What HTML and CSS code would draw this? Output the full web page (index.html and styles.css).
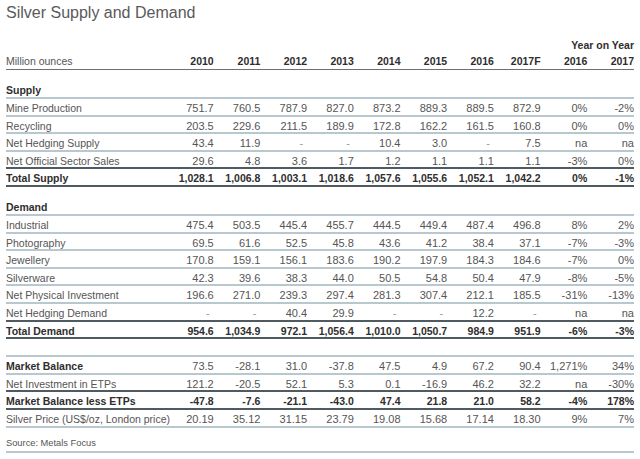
FILE: index.html
```html
<!DOCTYPE html>
<html>
<head>
<meta charset="utf-8">
<title>Silver Supply and Demand</title>
<link rel="stylesheet" href="styles.css">
</head>
<body>
<h1 class="title">Silver Supply and Demand</h1>
<div class="table">
  <div class="row yoy-row"><div class="yoy">Year on Year</div></div>
  <div class="row head">
    <div class="label">Million ounces</div>
    <div>2010</div><div>2011</div><div>2012</div><div>2013</div><div>2014</div><div>2015</div><div>2016</div><div>2017F</div><div>2016</div><div>2017</div>
  </div>
  <div class="row section"><div class="label">Supply</div></div>
  <div class="row"><div class="label">Mine Production</div><div>751.7</div><div>760.5</div><div>787.9</div><div>827.0</div><div>873.2</div><div>889.3</div><div>889.5</div><div>872.9</div><div>0%</div><div>-2%</div></div>
  <div class="row"><div class="label">Recycling</div><div>203.5</div><div>229.6</div><div>211.5</div><div>189.9</div><div>172.8</div><div>162.2</div><div>161.5</div><div>160.8</div><div>0%</div><div>0%</div></div>
  <div class="row"><div class="label">Net Hedging Supply</div><div>43.4</div><div>11.9</div><div class="dash">-</div><div class="dash">-</div><div>10.4</div><div>3.0</div><div class="dash">-</div><div>7.5</div><div>na</div><div>na</div></div>
  <div class="row dark"><div class="label">Net Official Sector Sales</div><div>29.6</div><div>4.8</div><div>3.6</div><div>1.7</div><div>1.2</div><div>1.1</div><div>1.1</div><div>1.1</div><div>-3%</div><div>0%</div></div>
  <div class="row dark bold"><div class="label">Total Supply</div><div>1,028.1</div><div>1,006.8</div><div>1,003.1</div><div>1,018.6</div><div>1,057.6</div><div>1,055.6</div><div>1,052.1</div><div>1,042.2</div><div>0%</div><div>-1%</div></div>
  <div class="row section"><div class="label">Demand</div></div>
  <div class="row"><div class="label">Industrial</div><div>475.4</div><div>503.5</div><div>445.4</div><div>455.7</div><div>444.5</div><div>449.4</div><div>487.4</div><div>496.8</div><div>8%</div><div>2%</div></div>
  <div class="row"><div class="label">Photography</div><div>69.5</div><div>61.6</div><div>52.5</div><div>45.8</div><div>43.6</div><div>41.2</div><div>38.4</div><div>37.1</div><div>-7%</div><div>-3%</div></div>
  <div class="row"><div class="label">Jewellery</div><div>170.8</div><div>159.1</div><div>156.1</div><div>183.6</div><div>190.2</div><div>197.9</div><div>184.3</div><div>184.6</div><div>-7%</div><div>0%</div></div>
  <div class="row"><div class="label">Silverware</div><div>42.3</div><div>39.6</div><div>38.3</div><div>44.0</div><div>50.5</div><div>54.8</div><div>50.4</div><div>47.9</div><div>-8%</div><div>-5%</div></div>
  <div class="row"><div class="label">Net Physical Investment</div><div>196.6</div><div>271.0</div><div>239.3</div><div>297.4</div><div>281.3</div><div>307.4</div><div>212.1</div><div>185.5</div><div>-31%</div><div>-13%</div></div>
  <div class="row dark"><div class="label">Net Hedging Demand</div><div class="dash">-</div><div class="dash">-</div><div>40.4</div><div>29.9</div><div class="dash">-</div><div class="dash">-</div><div>12.2</div><div class="dash">-</div><div>na</div><div>na</div></div>
  <div class="row dark bold"><div class="label">Total Demand</div><div>954.6</div><div>1,034.9</div><div>972.1</div><div>1,056.4</div><div>1,010.0</div><div>1,050.7</div><div>984.9</div><div>951.9</div><div>-6%</div><div>-3%</div></div>
  <div class="row empty"></div>
  <div class="row bold"><div class="label">Market Balance</div><div class="reg">73.5</div><div class="reg">-28.1</div><div class="reg">31.0</div><div class="reg">-37.8</div><div class="reg">47.5</div><div class="reg">4.9</div><div class="reg">67.2</div><div class="reg">90.4</div><div class="reg">1,271%</div><div class="reg">34%</div></div>
  <div class="row dark"><div class="label">Net Investment in ETPs</div><div>121.2</div><div>-20.5</div><div>52.1</div><div>5.3</div><div>0.1</div><div>-16.9</div><div>46.2</div><div>32.2</div><div>na</div><div>-30%</div></div>
  <div class="row dark bold"><div class="label">Market Balance less ETPs</div><div>-47.8</div><div>-7.6</div><div>-21.1</div><div>-43.0</div><div>47.4</div><div>21.8</div><div>21.0</div><div>58.2</div><div>-4%</div><div>178%</div></div>
  <div class="row"><div class="label">Silver Price (US$/oz, London price)</div><div>20.19</div><div>35.12</div><div>31.15</div><div>23.79</div><div>19.08</div><div>15.68</div><div>17.14</div><div>18.30</div><div>9%</div><div>7%</div></div>
  <div class="row source"><div class="label">Source: Metals Focus</div></div>
</div>
</body>
</html>
```

FILE: styles.css
```css
html, body {
  margin: 0;
  padding: 0;
  background: #ffffff;
}

body {
  padding: 0 6px;
  font-family: "Liberation Sans", Arial, sans-serif;
  color: #555555;
}

.title {
  margin: 0;
  padding-top: 1px;
  font-size: 16px;
  font-weight: normal;
  line-height: 24px;
  color: #5a5a5a;
}

.table {
  margin-top: 12px;
  width: 628px;
}

.row {
  display: grid;
  grid-template-columns: 161px repeat(10, 1fr);
  align-items: start;
  height: 17.6px;
  padding-top: 3px;
  box-sizing: border-box;
  border-bottom: 2px solid #b9c7cf;
  font-size: 11px;
  white-space: nowrap;
}

.row > div {
  text-align: right;
  line-height: 12.6px;
}

.row > .label {
  text-align: left;
  font-size: 10.5px;
}

.row.dark {
  border-bottom-color: #4f5a61;
}

.row.bold > div {
  font-weight: bold;
  color: #2e2e2e;
  font-size: 10.5px;
}

.row.bold > .reg {
  font-weight: normal;
  color: #555555;
  font-size: 11px;
}

.yoy-row {
  border-bottom: none;
  height: 16px;
  padding-top: 2px;
}

.yoy {
  grid-column: 10 / 12;
  font-weight: bold;
  font-size: 10.5px;
  color: #2e2e2e;
}

.head {
  height: 17px;
  padding-top: 2px;
  border-bottom: 1.5px solid #6f6f6f;
}

.head > div {
  font-weight: bold;
  font-size: 10.5px;
  color: #2e2e2e;
}

.head > .label {
  font-weight: normal;
  color: #555555;
}

.section {
  height: 29px;
  padding-top: 0;
  align-items: end;
}

.section > div {
  line-height: 14px;
}

.section > .label {
  font-weight: bold;
  color: #2e2e2e;
}

.empty {
  height: 18px;
}

.source {
  height: 25px;
  padding-top: 0;
  align-items: end;
}

.source > div {
  line-height: 15px;
}

.source > .label {
  font-size: 9.3px;
  grid-column: 1 / 4;
}

.dash {
  color: #9a9a9a;
  padding-right: 4px;
}
```
